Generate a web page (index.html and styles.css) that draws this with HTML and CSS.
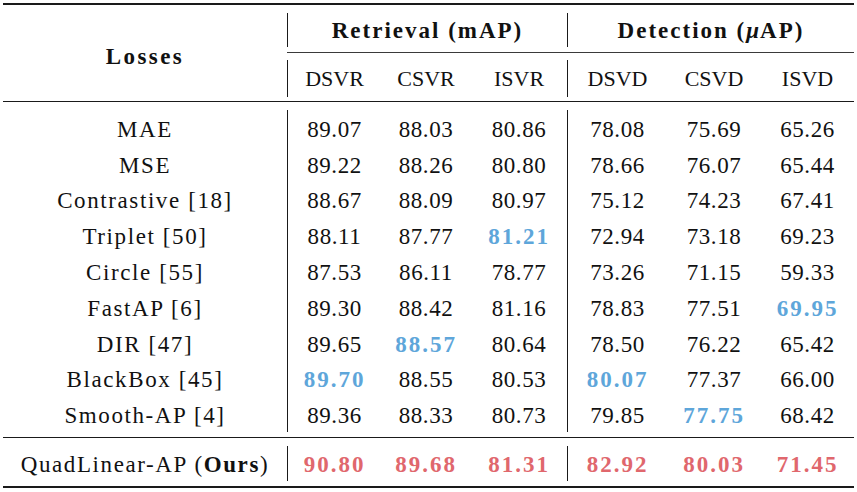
FILE: index.html
```
<!DOCTYPE html>
<html lang="en">
<head>
<meta charset="utf-8">
<title>Losses comparison</title>
<link rel="stylesheet" href="styles.css">
</head>
<body>
<table class="results">
  <colgroup>
    <col class="c-name"><col class="c-dsvr"><col class="c-csvr"><col class="c-isvr"><col class="c-dsvd"><col class="c-csvd"><col class="c-isvd">
  </colgroup>
  <tr class="sep sep-top"><td colspan="7"><div class="rule thick"></div></td></tr>
  <tr class="head1">
    <th class="losses" rowspan="3">Losses</th>
    <th class="group vl" colspan="3">Retrieval (mAP)</th>
    <th class="group vl" colspan="3">Detection (<i>μ</i>AP)</th>
  </tr>
  <tr class="sep sep-cmid"><td colspan="6"><div class="rule thin"></div></td></tr>
  <tr class="head2">
    <th class="sub vl">DSVR</th><th class="sub">CSVR</th><th class="sub">ISVR</th>
    <th class="sub vl">DSVD</th><th class="sub">CSVD</th><th class="sub">ISVD</th>
  </tr>
  <tr class="sep sep-mid"><td colspan="7"><div class="rule mid"></div></td></tr>
  <tr class="data"><td class="name">MAE</td><td class="num vl">89.07</td><td class="num">88.03</td><td class="num">80.86</td><td class="num vl">78.08</td><td class="num">75.69</td><td class="num">65.26</td></tr>
  <tr class="data"><td class="name">MSE</td><td class="num vl">89.22</td><td class="num">88.26</td><td class="num">80.80</td><td class="num vl">78.66</td><td class="num">76.07</td><td class="num">65.44</td></tr>
  <tr class="data"><td class="name">Contrastive [18]</td><td class="num vl">88.67</td><td class="num">88.09</td><td class="num">80.97</td><td class="num vl">75.12</td><td class="num">74.23</td><td class="num">67.41</td></tr>
  <tr class="data"><td class="name">Triplet [50]</td><td class="num vl">88.11</td><td class="num">87.77</td><td class="num best2">81.21</td><td class="num vl">72.94</td><td class="num">73.18</td><td class="num">69.23</td></tr>
  <tr class="data"><td class="name">Circle [55]</td><td class="num vl">87.53</td><td class="num">86.11</td><td class="num">78.77</td><td class="num vl">73.26</td><td class="num">71.15</td><td class="num">59.33</td></tr>
  <tr class="data"><td class="name">FastAP [6]</td><td class="num vl">89.30</td><td class="num">88.42</td><td class="num">81.16</td><td class="num vl">78.83</td><td class="num">77.51</td><td class="num best2">69.95</td></tr>
  <tr class="data"><td class="name">DIR [47]</td><td class="num vl">89.65</td><td class="num best2">88.57</td><td class="num">80.64</td><td class="num vl">78.50</td><td class="num">76.22</td><td class="num">65.42</td></tr>
  <tr class="data"><td class="name">BlackBox [45]</td><td class="num vl best2">89.70</td><td class="num">88.55</td><td class="num">80.53</td><td class="num vl best2">80.07</td><td class="num">77.37</td><td class="num">66.00</td></tr>
  <tr class="data"><td class="name">Smooth-AP [4]</td><td class="num vl">89.36</td><td class="num">88.33</td><td class="num">80.73</td><td class="num vl">79.85</td><td class="num best2">77.75</td><td class="num">68.42</td></tr>
  <tr class="sep sep-mid2"><td colspan="7"><div class="rule mid"></div></td></tr>
  <tr class="ours"><td class="name">QuadLinear-AP (<b>Ours</b>)</td><td class="num vl best1">90.80</td><td class="num best1">89.68</td><td class="num best1">81.31</td><td class="num vl best1">82.92</td><td class="num best1">80.03</td><td class="num best1">71.45</td></tr>
  <tr class="sep sep-bottom"><td colspan="7"><div class="rule thick"></div></td></tr>
</table>
</body>
</html>
```
FILE: styles.css
```
html, body {
  margin: 0;
  padding: 0;
  background: #ffffff;
}

.results {
  margin: 3px 0 0 3px;
  width: 851px;
  border-collapse: separate;
  border-spacing: 0;
  table-layout: fixed;
  font-family: "Liberation Serif", "Times New Roman", serif;
  font-size: 23px;
  color: #111111;
}

.c-name { width: 284px; }
.c-dsvr { width: 94px; }
.c-csvr { width: 90px; }
.c-isvr { width: 96px; }
.c-dsvd { width: 100px; }
.c-csvd { width: 94px; }
.c-isvd { width: 93px; }

.results th,
.results td {
  box-sizing: border-box;
  padding: 0;
  text-align: center;
  vertical-align: middle;
  white-space: nowrap;
  line-height: 1;
}

.vl {
  border-left: 1px solid #1a1a1a;
}

/* rules (booktabs style) */
.results .sep td { height: auto; }
.rule { background: #1a1a1a; }
.rule.thick { height: 2px; }
.rule.mid { height: 1px; }
.rule.thin { height: 1px; background: #3a3a3a; }

.results .sep-top td { padding-bottom: 8px; }
.results .sep-cmid td { padding: 5px 0 7px; }
.results .sep-mid td { padding: 4px 0 8px; }
.results .sep-mid2 td { padding: 5px 0 8px; }
.results .sep-bottom td { padding-top: 5px; }

/* header */
.head1 th { height: 34px; }
.head2 th { height: 37px; }

.results .losses {
  font-size: 23px;
  font-weight: bold;
  letter-spacing: 2.4px;
  padding-top: 3px;
}

.group {
  font-size: 23px;
  font-weight: bold;
  letter-spacing: 2px;
}

.group i {
  font-style: italic;
  letter-spacing: 1px;
}

.sub {
  font-size: 22px;
  font-weight: normal;
}

/* body */
.data td { height: 35.8px; }
.results .data td { padding-top: 3px; }
.ours td { height: 35px; }
.results .ours td { padding-top: 2px; }

.name {
  letter-spacing: 1.6px;
}

.num {
  letter-spacing: 0.6px;
}

.best1,
.best2 {
  font-weight: bold;
  letter-spacing: 2px;
}

.best1 { color: #e0676d; }
.best2 { color: #5ea6da; }
```
